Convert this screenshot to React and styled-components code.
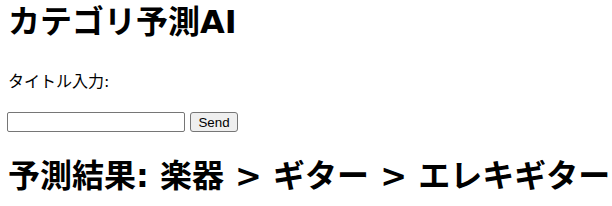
import React, { useState } from 'react';
import styled, { createGlobalStyle } from 'styled-components';

const GlobalStyle = createGlobalStyle`
  html, body {
    margin:0;
    padding:0;
    background:#fff;
  }
  body {
    padding:0 8px;
    color:#000;
    font-family:"DejaVu Sans", "Noto Sans CJK JP", sans-serif;
  }
`;

const Page = styled.div`
  display:flex;
  flex-direction:column;
`;
const Heading = styled.h1`
  margin:${({ top }) => top || 0}px 0 0;
  font-size:32px;
  line-height:44px;
  font-weight:700;
  white-space:nowrap;
`;
const Label = styled.p`
  margin:26px 0 0;
  font-size:16px;
  line-height:24px;
`;
const Row = styled.form`
  display:flex;
  align-items:center;
  gap:5px;
  margin-top:18px;
  margin-left:-1px;
`;
const Input = styled.input`
  box-sizing:border-box;
  width:178px;
  height:20px;
  margin:0;
  padding:1px 2px;
  border:1px solid #767676;
  border-radius:2px;
  font:13.33px "Liberation Sans", sans-serif;
`;
const Button = styled.button`
  box-sizing:border-box;
  width:48px;
  height:20px;
  margin:0;
  padding:0 6px;
  border:1px solid #767676;
  border-radius:3px;
  background:#efefef;
  color:#000;
  font:13.33px "Liberation Sans", sans-serif;
`;

export default function App() {
  const [title, setTitle] = useState('');
  return (
    <Page>
      <GlobalStyle />
      <Heading>カテゴリ予測AI</Heading>
      <Label>タイトル入力:</Label>
      <Row onSubmit={(e) => e.preventDefault()}>
        <Input value={title} onChange={(e) => setTitle(e.target.value)} />
        <Button type='submit'>Send</Button>
      </Row>
      <Heading top={22}>予測結果: 楽器 &gt; ギター &gt; エレキギター</Heading>
    </Page>
  );
}
